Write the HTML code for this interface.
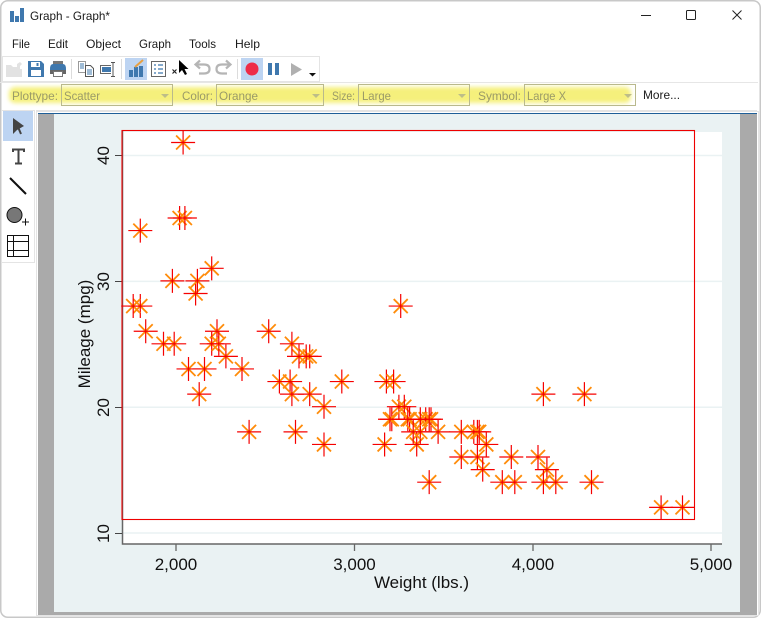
<!DOCTYPE html>
<html><head><meta charset="utf-8"><title>Graph - Graph*</title>
<style>
html,body{margin:0;padding:0;background:#fff;width:761px;height:618px;overflow:hidden}
svg{display:block}
text{font-family:"Liberation Sans",sans-serif}
.m{font-size:12px;fill:#1a1a1a}
.l{font-size:12px;fill:#9a9a68}
.t{font-size:17px;fill:#111}
</style></head><body>
<svg width="761" height="618" viewBox="0 0 761 618" xmlns="http://www.w3.org/2000/svg">
<defs>
<filter id="bl" x="-5%" y="-50%" width="110%" height="200%"><feGaussianBlur stdDeviation="2"/></filter>
<g id="m"><path d="M-7-7L7 7M-7 7L7-7" stroke="#ff8c0a" stroke-width="1.8" fill="none"/><path d="M-12 0H12M0-12V12" stroke="#f60000" stroke-width="1.2" fill="none"/></g>
</defs>
<rect width="761" height="618" fill="#fff"/>
<rect x="0.75" y="0.75" width="759.5" height="616.5" rx="7" fill="#fff" stroke="#c8c8c8" stroke-width="1.5"/>

<!-- title bar -->
<rect x="10" y="11" width="4" height="11" fill="#3f78ae"/><rect x="15" y="16" width="4" height="6" fill="#3f78ae"/><rect x="20" y="8" width="4" height="14" fill="#3f78ae"/>
<text x="30" y="20" class="m" textLength="80" lengthAdjust="spacingAndGlyphs">Graph - Graph*</text>
<path d="M641 15.5H651" stroke="#222" stroke-width="1"/>
<rect x="686.5" y="10.5" width="9" height="9" rx="1" fill="none" stroke="#222" stroke-width="1"/>
<path d="M732.5 10.5L741.5 19.5M741.5 10.5L732.5 19.5" stroke="#222" stroke-width="1"/>

<!-- menu -->
<text x="12" y="48" class="m" textLength="18" lengthAdjust="spacingAndGlyphs">File</text>
<text x="48" y="48" class="m" textLength="20" lengthAdjust="spacingAndGlyphs">Edit</text>
<text x="86" y="48" class="m" textLength="35" lengthAdjust="spacingAndGlyphs">Object</text>
<text x="139" y="48" class="m" textLength="32" lengthAdjust="spacingAndGlyphs">Graph</text>
<text x="189" y="48" class="m" textLength="27" lengthAdjust="spacingAndGlyphs">Tools</text>
<text x="235" y="48" class="m" textLength="25" lengthAdjust="spacingAndGlyphs">Help</text>

<!-- toolbar -->
<rect x="2.5" y="56.5" width="317" height="25" fill="#fff" stroke="#e4e4e4"/>
<path d="M71.5 59V79M121.5 59V79M237.5 59V79" stroke="#dcdcdc"/>
<path d="M6 77V65H11L13 67H17V64L20 62L22 64L20 66V69H22V77Z" fill="#e2e2e2"/>
<path d="M28 61H41L44 64V77H28Z" fill="#3f78ae"/><rect x="31" y="62" width="9" height="5" fill="#fff"/><rect x="36.500" y="63" width="2" height="3" fill="#3f78ae"/><rect x="31" y="70" width="10" height="6" fill="#fff"/>
<rect x="53" y="61" width="10" height="5" fill="#777"/><path d="M50 69Q50 64 53 64H63Q66 64 66 69V74H50Z" fill="#3f78ae"/><path d="M50 70H66V74H50Z" fill="#666"/><rect x="53.500" y="71.500" width="9" height="5" fill="#fff" stroke="#777"/>
<path d="M78.500 61.500H85.500V72.500H78.500Z" fill="#fff" stroke="#9a9a9a"/><path d="M85.500 65.500H90.500L93.500 68.500V76.500H85.500Z" fill="#fff" stroke="#555"/><path d="M87 70H92M87 72H92M87 74H92M80 64H84M80 66H84M80 68H84" stroke="#3f78ae"/>
<path d="M111 65.500H100.500V73.500H111" fill="none" stroke="#666"/><rect x="102" y="67" width="9" height="5" fill="#3f78ae"/><path d="M111 62.500H115M111 76.500H115M113 62.500V76.500" stroke="#555"/>
<rect x="125" y="58" width="22" height="22" fill="#bdd4f2"/>
<rect x="129" y="70" width="4" height="7" fill="#3f78ae"/><rect x="134" y="67" width="4" height="10" fill="#3f78ae"/><rect x="139" y="66" width="4" height="11" fill="#3f78ae"/>
<path d="M135 67L143 60" stroke="#e8a040" stroke-width="2"/>
<rect x="151.500" y="61.500" width="14" height="15" fill="#fff" stroke="#666"/><path d="M154 65H156M154 69H156M154 73H156M158 65H163M158 69H163M158 73H163" stroke="#3f78ae" stroke-width="1.2"/>
<path d="M172.500 69.500L176.500 73.500M176.500 69.500L172.500 73.500" stroke="#222" stroke-width="1.2"/>
<path d="M179 60V73L182 70L185 75L187 74L184.500 69H188.500Z" fill="#000"/>
<path d="M197 64.500H204Q209.500 64.500 209.500 69Q209.500 73.500 204 73.500H199M200 60.500L195.500 64.500L200 68.500" fill="none" stroke="#b5b5b5" stroke-width="2.2"/>
<path d="M229 64.500H222Q216.500 64.500 216.500 69Q216.500 73.500 222 73.500H227M226 60.500L230.500 64.500L226 68.500" fill="none" stroke="#b5b5b5" stroke-width="2.2"/>
<rect x="241" y="58" width="22" height="22" fill="#bdd4f2"/>
<circle cx="252" cy="69" r="6.500" fill="#ee2c47"/>
<rect x="268" y="63" width="4" height="12" fill="#3f78ae"/><rect x="275" y="63" width="4" height="12" fill="#3f78ae"/>
<path d="M291 63V76L302 69.500Z" fill="#b0b0b0"/>
<path d="M309 73H316L312.500 76.500Z" fill="#111"/>

<path d="M0 82.500H758" stroke="#e6e6e6"/>

<!-- props bar -->
<rect x="9" y="87" width="622" height="16" rx="6" fill="#f5f07c" filter="url(#bl)"/>
<rect x="61.500" y="84.500" width="111" height="21" fill="none" stroke="#b9b98c"/>
<rect x="216.500" y="84.500" width="107" height="21" fill="none" stroke="#b9b98c"/>
<rect x="358.500" y="84.500" width="111" height="21" fill="none" stroke="#b9b98c"/>
<rect x="524.500" y="84.500" width="111" height="21" fill="none" stroke="#b9b98c"/>
<path d="M161 94H169L165 98ZM312 94H320L316 98ZM458 94H466L462 98ZM624 94H632L628 98Z" fill="#bdbd88"/>
<text x="12" y="100" class="l" textLength="46" lengthAdjust="spacingAndGlyphs">Plottype:</text>
<text x="64" y="100" class="l" textLength="36" lengthAdjust="spacingAndGlyphs">Scatter</text>
<text x="182" y="100" class="l" textLength="31" lengthAdjust="spacingAndGlyphs">Color:</text>
<text x="219" y="100" class="l" textLength="39" lengthAdjust="spacingAndGlyphs">Orange</text>
<text x="332" y="100" class="l" textLength="23" lengthAdjust="spacingAndGlyphs">Size:</text>
<text x="362" y="100" class="l" textLength="29" lengthAdjust="spacingAndGlyphs">Large</text>
<text x="478" y="100" class="l" textLength="43" lengthAdjust="spacingAndGlyphs">Symbol:</text>
<text x="527" y="100" class="l" textLength="39" lengthAdjust="spacingAndGlyphs">Large X</text>
<text x="643" y="99" class="m" textLength="37" lengthAdjust="spacingAndGlyphs">More...</text>

<path d="M36 110.500H757" stroke="#e4e4e4"/>

<!-- left tools -->
<rect x="1.500" y="110.500" width="33" height="152" fill="#fff" stroke="#e4e4e4"/>
<rect x="3" y="111" width="30" height="30" fill="#bdd4f2"/>
<path d="M13 118V134L17 130L24 126Z" fill="#444"/><path d="M18 127L21 134" stroke="#444" stroke-width="2"/>
<path d="M13 152V149.500H24V152M18.500 150V163M15 163.500H22" fill="none" stroke="#444" stroke-width="2"/>
<path d="M10 178L26 194" stroke="#111" stroke-width="2"/>
<circle cx="14.500" cy="215" r="7.500" fill="#777" stroke="#111" stroke-width="1"/>
<path d="M22 222H29M25.500 218.500V225.500" stroke="#111" stroke-width="1"/>
<rect x="7.500" y="235.500" width="21" height="21" fill="#fff" stroke="#111"/>
<path d="M7.500 241.500H28.500M7.500 250.500H28.500M13.500 235.500V256.500" stroke="#111"/>

<!-- graph area -->
<rect x="36.500" y="111.500" width="722" height="504" fill="#fff" stroke="#e4e4e4"/>
<rect x="38" y="113" width="719" height="502" fill="#aaaaaa"/>
<rect x="38" y="113" width="719" height="1" fill="#1f5f98"/>
<rect x="54" y="114" width="686" height="498" fill="#eaf2f3"/>
<rect x="122" y="132" width="600" height="412" fill="#fff"/>
<path d="M122 155.500H722M122 281.400H722M122 407.200H722M122 533H722" stroke="#eaf2f3" stroke-width="1.500"/>
<path d="M122.500 130V544H722" fill="none" stroke="#666" stroke-width="1.500"/>
<path d="M115 155.500H122M115 281.500H122M115 407.500H122M115 533.500H122" stroke="#444"/>
<path d="M176 544V551M354.500 544V551M533 544V551M711 544V551" stroke="#666" stroke-width="1.300"/>
<text class="t" text-anchor="middle" x="176" y="570">2,000</text>
<text class="t" text-anchor="middle" x="354.500" y="570">3,000</text>
<text class="t" text-anchor="middle" x="533" y="570">4,000</text>
<text class="t" text-anchor="middle" x="711" y="570">5,000</text>
<text class="t" text-anchor="middle" x="421.500" y="588">Weight (lbs.)</text>
<text class="t" text-anchor="middle" transform="translate(109,155.500) rotate(-90)">40</text>
<text class="t" text-anchor="middle" transform="translate(109,281.500) rotate(-90)">30</text>
<text class="t" text-anchor="middle" transform="translate(109,407.500) rotate(-90)">20</text>
<text class="t" text-anchor="middle" transform="translate(109,533.500) rotate(-90)">10</text>
<text class="t" text-anchor="middle" transform="translate(90,334) rotate(-90)">Mileage (mpg)</text>

<g transform="translate(0,-0.500)">
<use href="#m" x="341.8" y="382.04"/><use href="#m" x="416.7" y="444.94"/><use href="#m" x="290.1" y="382.04"/><use href="#m" x="398.9" y="407.2"/><use href="#m" x="546.9" y="470.1"/><use href="#m" x="473.8" y="432.36"/><use href="#m" x="217" y="331.72"/><use href="#m" x="404.3" y="407.2"/><use href="#m" x="511.3" y="457.52"/><use href="#m" x="425.7" y="419.78"/>
<use href="#m" x="591.5" y="482.68"/><use href="#m" x="514.8" y="482.68"/><use href="#m" x="584.4" y="394.62"/><use href="#m" x="195.6" y="293.98"/><use href="#m" x="477.4" y="457.52"/><use href="#m" x="386.4" y="382.04"/><use href="#m" x="393.6" y="382.04"/><use href="#m" x="309.7" y="356.88"/><use href="#m" x="431" y="419.78"/><use href="#m" x="197.4" y="281.4"/>
<use href="#m" x="461.3" y="432.36"/><use href="#m" x="461.3" y="457.52"/><use href="#m" x="486.3" y="444.94"/><use href="#m" x="140.3" y="306.56"/><use href="#m" x="291.9" y="394.62"/><use href="#m" x="682.5" y="507.84"/><use href="#m" x="661.1" y="507.84"/><use href="#m" x="502.3" y="482.68"/><use href="#m" x="279.4" y="382.04"/><use href="#m" x="543.4" y="482.68"/>
<use href="#m" x="482.7" y="470.1"/><use href="#m" x="420.3" y="432.36"/><use href="#m" x="555.8" y="482.68"/><use href="#m" x="324" y="407.2"/><use href="#m" x="543.4" y="394.62"/><use href="#m" x="409.6" y="419.78"/><use href="#m" x="407.8" y="419.78"/><use href="#m" x="477.4" y="432.36"/><use href="#m" x="420.3" y="419.78"/><use href="#m" x="306.2" y="356.88"/>
<use href="#m" x="538" y="457.52"/><use href="#m" x="400.7" y="306.56"/><use href="#m" x="140.3" y="231.08"/><use href="#m" x="211.7" y="344.3"/><use href="#m" x="268.7" y="331.72"/><use href="#m" x="413.2" y="432.36"/><use href="#m" x="479.2" y="432.36"/><use href="#m" x="438.1" y="432.36"/><use href="#m" x="391.8" y="419.78"/><use href="#m" x="390" y="419.78"/>
<use href="#m" x="429.2" y="419.78"/><use href="#m" x="299" y="356.88"/><use href="#m" x="324" y="444.94"/><use href="#m" x="188.5" y="369.46"/><use href="#m" x="291.9" y="344.3"/><use href="#m" x="242" y="369.46"/><use href="#m" x="179.6" y="218.5"/><use href="#m" x="225.9" y="356.88"/><use href="#m" x="309.7" y="394.62"/><use href="#m" x="199.2" y="394.62"/>
<use href="#m" x="218.8" y="344.3"/><use href="#m" x="133.2" y="306.56"/><use href="#m" x="172.4" y="281.4"/><use href="#m" x="429.2" y="482.68"/><use href="#m" x="145.7" y="331.72"/><use href="#m" x="184.9" y="218.5"/><use href="#m" x="249.1" y="432.36"/><use href="#m" x="211.7" y="268.82"/><use href="#m" x="295.5" y="432.36"/><use href="#m" x="204.5" y="369.46"/>
<use href="#m" x="183.1" y="143.02"/><use href="#m" x="163.5" y="344.3"/><use href="#m" x="174.2" y="344.3"/><use href="#m" x="384.6" y="444.94"/>
</g>
<rect x="122" y="130.500" width="572.500" height="389" fill="none" stroke="#ee0000" stroke-width="1.100"/>
</svg>
</body></html>
